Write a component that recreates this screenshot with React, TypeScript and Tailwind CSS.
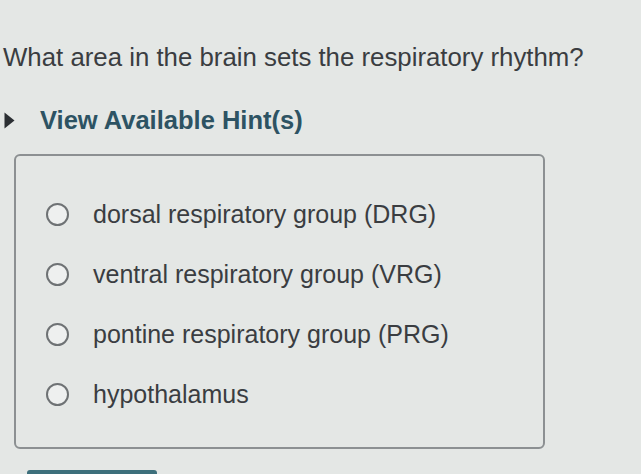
import React from 'react';

const options = [
  'dorsal respiratory group (DRG)',
  'ventral respiratory group (VRG)',
  'pontine respiratory group (PRG)',
  'hypothalamus',
];

export default function App() {
  return (
    <div
      className="w-[641px] h-[474px] overflow-hidden bg-[#e4e7e5] text-[#3a3d41]"
      style={{ fontFamily: '"Liberation Sans", Arial, sans-serif' }}
    >
      <h1 className="pt-[42px] pl-[3px] text-[25.8px] leading-[30px]">
        What area in the brain sets the respiratory rhythm?
      </h1>

      <button className="mt-[34px] ml-[4px] flex items-center gap-[25px] text-[#2d5363] font-bold text-[25.5px] leading-[28px]">
        <svg width="11" height="17" viewBox="0 0 11 17">
          <path d="M0.5 0.5 L10.5 8.5 L0.5 16.5 Z" fill="#2b2f33" />
        </svg>
        <span>View Available Hint(s)</span>
      </button>

      <div className="mt-[20px] ml-[14px] w-[531px] h-[295px] border-2 border-[#8c9092] rounded-[6px] pt-[46px] pl-[30px] flex flex-col gap-[36px]">
        {options.map((opt) => (
          <label key={opt} className="flex items-center gap-[24px] text-[25px] leading-[24px]">
            <span className="w-[23px] h-[23px] rounded-full border-2 border-[#6e7274] bg-[#eef0ef] shrink-0" />
            <span>{opt}</span>
          </label>
        ))}
      </div>

      <div className="mt-[21px] ml-[27px] w-[130px] h-[20px] rounded-t-[3px] bg-[#3d6f7b]" />
    </div>
  );
}
